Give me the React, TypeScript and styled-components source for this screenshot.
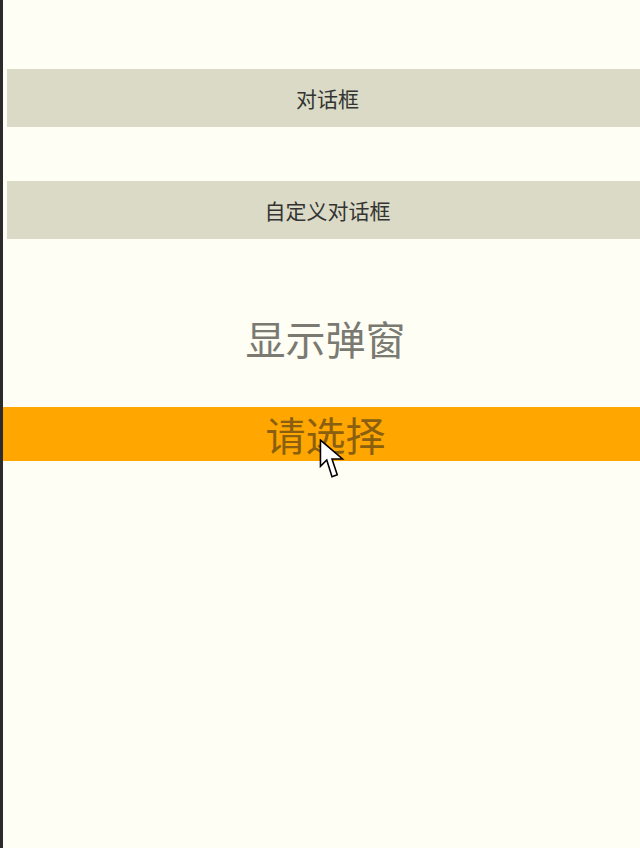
import styled, { createGlobalStyle } from 'styled-components';

const GlobalStyle = createGlobalStyle`
    html, body {
        margin: 0;
        padding: 0;
        background: #fffef4;
    }
    body {
        font-family: "Noto Sans CJK SC", "Noto Sans", sans-serif;
    }
`;

const StyledPage = styled.div`
    width: 640px;
    height: 848px;
    box-sizing: border-box;
    border-left: 3px solid #2b2b2b;
    background: #fffef4;
    display: flex;
    flex-direction: column;
    padding-top: 69px;
    overflow: hidden;
`;

const StyledButton = styled.div`
    margin-left: 4px;
    height: 58px;
    background-color: #dadac6;
    color: #333333;
    font-size: 21px;
    display: flex;
    justify-content: center;
    align-items: center;
    padding-left: 8px;
    & + & {
        margin-top: 54px;
    }
`;

const StyledTitle = styled.p`
    margin: 71px 0 0 0;
    font-size: 40px;
    line-height: 56px;
    color: #7a7a72;
    text-align: center;
    padding-left: 8px;
`;

const StyledPicker = styled.div`
    position: relative;
    margin-top: 41px;
    height: 54px;
    background-color: #ffa600;
    color: #8a5f10;
    font-size: 40px;
    display: flex;
    justify-content: center;
    align-items: center;
    padding-left: 8px;
`;

const StyledCursor = styled.svg`
    position: absolute;
    left: 316px;
    top: 32px;
    width: 26px;
    height: 42px;
`;

const Cursor = () => (
    <StyledCursor viewBox="0 0 24 40">
        <path
            d="M1 1 L1 26 L7 20 L12 36 L17 34 L12 19 L22 19 Z"
            fill="#ffffff"
            stroke="#000000"
            strokeWidth="1.5"
            strokeLinejoin="miter"
        />
    </StyledCursor>
);

const App = () => {
    return (
        <>
            <GlobalStyle />
            <StyledPage>
                <StyledButton>对话框</StyledButton>
                <StyledButton>自定义对话框</StyledButton>
                <StyledTitle>显示弹窗</StyledTitle>
                <StyledPicker>
                    请选择
                    <Cursor />
                </StyledPicker>
            </StyledPage>
        </>
    );
};

export default App;
